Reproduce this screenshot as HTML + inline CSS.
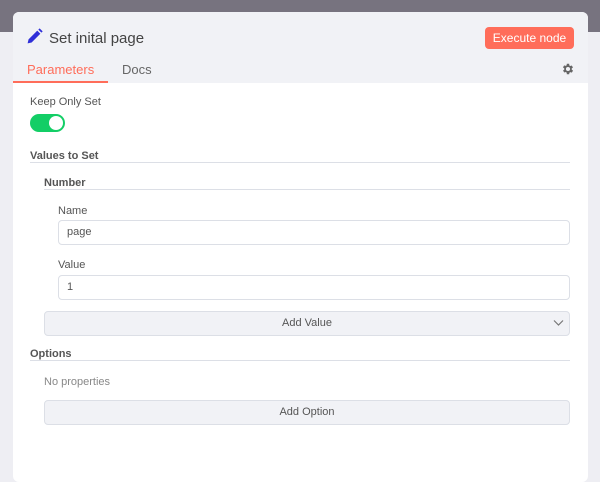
<!DOCTYPE html>
<html><head><style>
*{box-sizing:border-box;margin:0;padding:0}
body{width:600px;height:477px;overflow:hidden;background:#eeeef3;font-family:"Liberation Sans",sans-serif;position:relative}
.top{position:absolute;left:0;top:0;width:600px;height:32px;background:#77737f}
.panel{position:absolute;left:13px;top:12px;width:575px;height:470px;background:#fff;border-radius:6px;overflow:hidden}
.hdr{position:absolute;left:0;top:0;width:575px;height:71px;background:#f1f2f6}
.a{position:absolute;white-space:nowrap}
.lbl{font-size:11px;color:#555}
.line{position:absolute;height:1px;background:#dcdfe6}
.inp{position:absolute;border:1px solid #dcdfe6;border-radius:4px;background:#fff;font-size:11px;color:#555;padding-left:8px;line-height:23px}
.btn{position:absolute;border:1px solid #dcdfe6;border-radius:4px;background:#f1f2f6;font-size:11px;color:#555;text-align:center;line-height:23px}
</style></head><body>
<div class="top"></div>
<div class="panel">
 <div class="hdr"></div>
 <svg class="a" style="left:13px;top:16px" width="17" height="17" viewBox="0 0 16 16"><path d="M1.5 14.5l.9-3.8L10.6 2.5 13.5 5.4 5.3 13.6z" fill="#2f2fd8"/><path d="M11.6 1.5l1.2-1.2 2.9 2.9-1.2 1.2z" fill="#2f2fd8"/></svg>
 <div class="a" style="left:36px;top:18px;font-size:15px;color:#444">Set inital page</div>
 <div class="a" style="left:472px;top:15px;width:89px;height:22px;background:#ff6d5a;border-radius:4px;color:#fff;font-size:12px;text-align:center;line-height:22px">Execute node</div>
 <div class="a" style="left:14px;top:50px;font-size:13px;color:#ff6d5a">Parameters</div>
 <div class="a" style="left:0;top:69px;width:95px;height:2px;background:#ff6d5a"></div>
 <div class="a" style="left:109px;top:50px;font-size:13px;color:#666">Docs</div>
 <svg class="a" style="left:548px;top:50px" width="14" height="14" viewBox="0 0 24 24"><path fill="#666" d="M19.4 13a7.5 7.5 0 000-2l2.1-1.6-2-3.5-2.5 1a7 7 0 00-1.7-1L15 3h-4l-.4 2.7a7 7 0 00-1.7 1l-2.5-1-2 3.5L6.6 11a7.5 7.5 0 000 2l-2.1 1.6 2 3.5 2.5-1a7 7 0 001.7 1L11 21h4l.4-2.7a7 7 0 001.7-1l2.5 1 2-3.5zM13 15.5a3.5 3.5 0 110-7 3.5 3.5 0 010 7z" transform="translate(-1 0)"/></svg>
 <div class="a lbl" style="left:17px;top:84px">Keep Only Set</div>
 <div class="a" style="left:17px;top:102px;width:35px;height:18px;background:#13ce66;border-radius:9px"></div>
 <div class="a" style="left:36px;top:104px;width:14px;height:14px;background:#fff;border-radius:7px"></div>
 <div class="a lbl" style="left:17px;top:138px;font-weight:bold;color:#555">Values to Set</div>
 <div class="line" style="left:17px;top:150px;width:540px"></div>
 <div class="a lbl" style="left:31px;top:165px;font-weight:bold">Number</div>
 <div class="line" style="left:31px;top:177px;width:526px"></div>
 <div class="a lbl" style="left:45px;top:193px">Name</div>
 <div class="inp" style="left:45px;top:208px;width:512px;height:25px">page</div>
 <div class="a lbl" style="left:45px;top:247px">Value</div>
 <div class="inp" style="left:45px;top:263px;width:512px;height:25px">1</div>
 <div class="btn" style="left:31px;top:299px;width:526px;height:25px">Add Value</div>
 <svg class="a" style="left:540px;top:307px" width="11" height="8" viewBox="0 0 11 8"><path d="M1 1.5l4.5 4.5L10 1.5" stroke="#777" stroke-width="1.2" fill="none"/></svg>
 <div class="a lbl" style="left:17px;top:336px;font-weight:bold">Options</div>
 <div class="line" style="left:17px;top:348px;width:540px"></div>
 <div class="a lbl" style="left:31px;top:364px;color:#888">No properties</div>
 <div class="btn" style="left:31px;top:388px;width:526px;height:25px">Add Option</div>
</div>
</body></html>
